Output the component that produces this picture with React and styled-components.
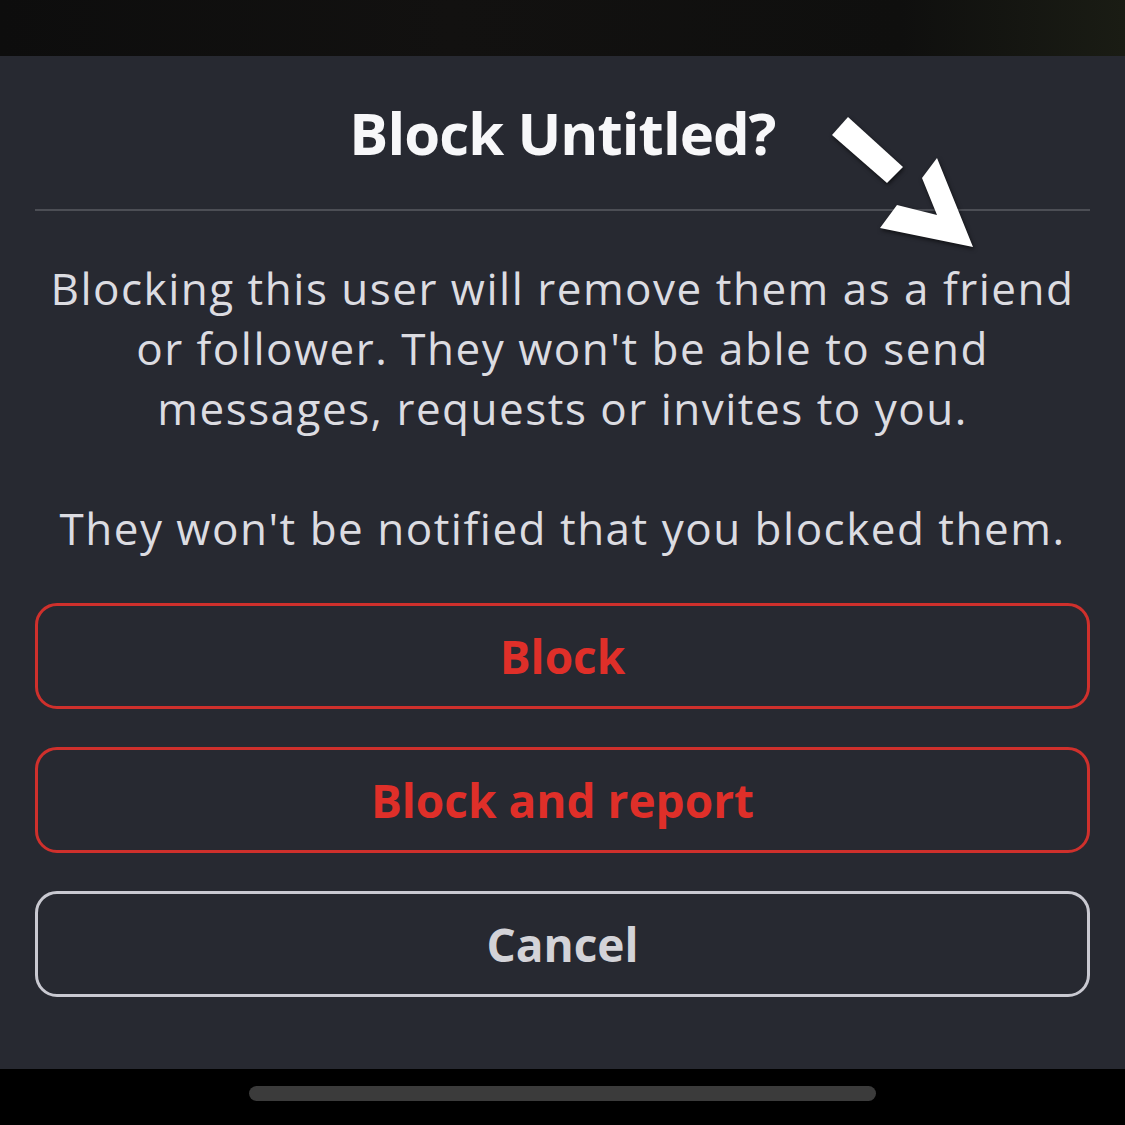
import React from "react";
import styled, { createGlobalStyle } from "styled-components";

const Global = createGlobalStyle`
  html, body { margin: 0; padding: 0; background: #000; }
  body { font-family: "Open Sans", "Noto Sans", sans-serif; }
`;

const Screen = styled.div`
  width: 1125px;
  height: 1125px;
  display: flex;
  flex-direction: column;
  background: #000;
  overflow: hidden;
`;

const Backdrop = styled.div`
  height: 56px;
  flex: none;
  background: linear-gradient(90deg, #0d0d0d 0%, #121110 40%, #0f0f0e 80%, #1a1c14 100%);
`;

const Sheet = styled.div`
  position: relative;
  flex: none;
  height: 1013px;
  box-sizing: border-box;
  background: #272931;
  padding: 37px 35px 0 35px;
  display: flex;
  flex-direction: column;
`;

const Title = styled.h1`
  margin: 0;
  font-size: 58px;
  line-height: 80px;
  font-weight: 700;
  color: #f7f7f9;
  text-align: center;
  letter-spacing: -0.9px;
`;

const Divider = styled.div`
  height: 2px;
  background: #4c4e55;
  margin-top: 36px;
`;

const Body = styled.div`
  margin-top: 47px;
  display: flex;
  flex-direction: column;
  gap: 60px;
`;

const Paragraph = styled.p`
  margin: 0;
  font-size: 44px;
  line-height: 60px;
  letter-spacing: 1.5px;
  color: #dcdce1;
  text-align: center;
  font-weight: 400;
  white-space: nowrap;
`;

const Actions = styled.div`
  margin-top: 45px;
  display: flex;
  flex-direction: column;
  gap: 38px;
`;

const ActionButton = styled.button`
  height: 106px;
  box-sizing: border-box;
  border-radius: 22px;
  background: transparent;
  border: 3px solid ${(p) => (p.$danger ? "#cf302c" : "#c9c9d1")};
  color: ${(p) => (p.$danger ? "#df2f29" : "#d3d3d8")};
  font-family: "Open Sans", "Noto Sans", sans-serif;
  font-size: 46px;
  font-weight: 700;
  display: flex;
  align-items: center;
  justify-content: center;
  padding: 0;
`;

const Arrow = styled.svg`
  position: absolute;
  left: 820px;
  top: 48px;
  width: 170px;
  height: 160px;
  filter: drop-shadow(1px 2px 2px rgba(0, 0, 0, 0.6));
`;

const HomeBar = styled.div`
  flex: 1;
  background: #000;
  display: flex;
  justify-content: center;
  padding-top: 17px;
`;

const Indicator = styled.div`
  width: 627px;
  height: 15px;
  border-radius: 8px;
  background: #3b3b3b;
`;

export default function App() {
  return (
    <>
      <Global />
      <Screen>
        <Backdrop />
        <Sheet>
          <Title>Block Untitled?</Title>
          <Divider />
          <Body>
            <Paragraph>
              Blocking this user will remove them as a friend
              <br />
              or follower. They won't be able to send
              <br />
              messages, requests or invites to you.
            </Paragraph>
            <Paragraph>They won't be notified that you blocked them.</Paragraph>
          </Body>
          <Actions>
            <ActionButton $danger>Block</ActionButton>
            <ActionButton $danger>Block and report</ActionButton>
            <ActionButton>Cancel</ActionButton>
          </Actions>
          <Arrow viewBox="820 104 170 160">
            <polygon points="832,135 848,117 903,167 887,183" fill="#ffffff" />
            <polygon points="937,158 973,247 880,228 897,205 937,215 922,178" fill="#ffffff" />
          </Arrow>
        </Sheet>
        <HomeBar>
          <Indicator />
        </HomeBar>
      </Screen>
    </>
  );
}
